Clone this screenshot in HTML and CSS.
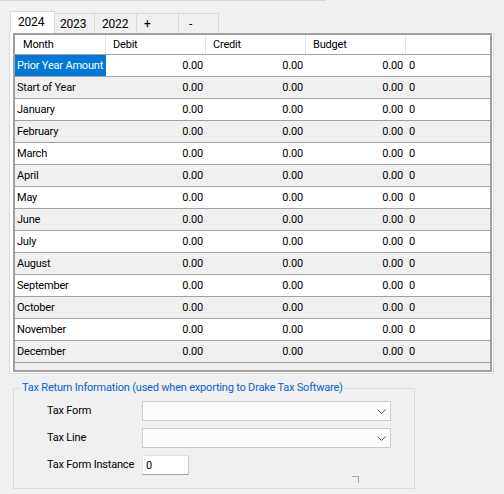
FILE: index.html
```html
<!DOCTYPE html>
<html lang="en">
<head>
  <meta charset="UTF-8">
  <meta name="viewport" content="width=device-width, initial-scale=1.0">
  <title>Account Budget</title>
  <link rel="stylesheet" href="styles.css">
</head>
<body>
  <div class="topEdge"></div>

  <div class="tabStrip">
    <div class="tab selectedTab">2024</div>
    <div class="tab tab2023">2023</div>
    <div class="tab tab2022">2022</div>
    <div class="tab tabPlus">+</div>
    <div class="tab tabMinus">-</div>
  </div>

  <div class="tabPanel">
    <div class="grid">
      <div class="gridRow headerRow">
        <div class="cell">Month</div>
        <div class="cell">Debit</div>
        <div class="cell">Credit</div>
        <div class="cell">Budget</div>
        <div class="cell"></div>
      </div>
      <div class="gridRow">
        <div class="cell monthCell selectedCell">Prior Year Amount</div>
        <div class="cell num">0.00</div><div class="cell num">0.00</div><div class="cell num">0.00</div><div class="cell extra">0</div>
      </div>
      <div class="gridRow altRow">
        <div class="cell monthCell">Start of Year</div>
        <div class="cell num">0.00</div><div class="cell num">0.00</div><div class="cell num">0.00</div><div class="cell extra">0</div>
      </div>
      <div class="gridRow">
        <div class="cell monthCell">January</div>
        <div class="cell num">0.00</div><div class="cell num">0.00</div><div class="cell num">0.00</div><div class="cell extra">0</div>
      </div>
      <div class="gridRow altRow">
        <div class="cell monthCell">February</div>
        <div class="cell num">0.00</div><div class="cell num">0.00</div><div class="cell num">0.00</div><div class="cell extra">0</div>
      </div>
      <div class="gridRow">
        <div class="cell monthCell">March</div>
        <div class="cell num">0.00</div><div class="cell num">0.00</div><div class="cell num">0.00</div><div class="cell extra">0</div>
      </div>
      <div class="gridRow altRow">
        <div class="cell monthCell">April</div>
        <div class="cell num">0.00</div><div class="cell num">0.00</div><div class="cell num">0.00</div><div class="cell extra">0</div>
      </div>
      <div class="gridRow">
        <div class="cell monthCell">May</div>
        <div class="cell num">0.00</div><div class="cell num">0.00</div><div class="cell num">0.00</div><div class="cell extra">0</div>
      </div>
      <div class="gridRow altRow">
        <div class="cell monthCell">June</div>
        <div class="cell num">0.00</div><div class="cell num">0.00</div><div class="cell num">0.00</div><div class="cell extra">0</div>
      </div>
      <div class="gridRow">
        <div class="cell monthCell">July</div>
        <div class="cell num">0.00</div><div class="cell num">0.00</div><div class="cell num">0.00</div><div class="cell extra">0</div>
      </div>
      <div class="gridRow altRow">
        <div class="cell monthCell">August</div>
        <div class="cell num">0.00</div><div class="cell num">0.00</div><div class="cell num">0.00</div><div class="cell extra">0</div>
      </div>
      <div class="gridRow">
        <div class="cell monthCell">September</div>
        <div class="cell num">0.00</div><div class="cell num">0.00</div><div class="cell num">0.00</div><div class="cell extra">0</div>
      </div>
      <div class="gridRow altRow">
        <div class="cell monthCell">October</div>
        <div class="cell num">0.00</div><div class="cell num">0.00</div><div class="cell num">0.00</div><div class="cell extra">0</div>
      </div>
      <div class="gridRow">
        <div class="cell monthCell">November</div>
        <div class="cell num">0.00</div><div class="cell num">0.00</div><div class="cell num">0.00</div><div class="cell extra">0</div>
      </div>
      <div class="gridRow altRow">
        <div class="cell monthCell">December</div>
        <div class="cell num">0.00</div><div class="cell num">0.00</div><div class="cell num">0.00</div><div class="cell extra">0</div>
      </div>
      <div class="gridFill"></div>
    </div>
  </div>

  <fieldset class="taxGroup">
    <legend class="taxLegend">Tax Return Information (used when exporting to Drake Tax Software)</legend>
    <div class="taxFields">
      <label class="fieldLabel">Tax Form</label>
      <div class="combo">
        <svg class="chevron" width="9" height="5" viewBox="0 0 9 5"><polyline points="0.5,0.5 4.5,4.5 8.5,0.5" fill="none" stroke="#606060" stroke-width="1"/></svg>
      </div>
      <label class="fieldLabel">Tax Line</label>
      <div class="combo">
        <svg class="chevron" width="9" height="5" viewBox="0 0 9 5"><polyline points="0.5,0.5 4.5,4.5 8.5,0.5" fill="none" stroke="#606060" stroke-width="1"/></svg>
      </div>
      <label class="fieldLabel">Tax Form Instance</label>
      <div class="instanceBox">0</div>
    </div>
    <div class="grip"></div>
  </fieldset>
</body>
</html>
```

FILE: styles.css
```css
body{
  margin: 0;
  background-color: #f0f0f0;
  font-family: Roboto, "Liberation Sans", sans-serif;
  font-size: 11px;
  letter-spacing: -0.2px;
  color: #000000;
}
.topEdge{
  width: 326px;
  height: 1px;
  background-color: #d9d9d9;
}

/* tabs */
.tabStrip{
  display: flex;
  align-items: flex-end;
  margin-top: 10px;
  margin-left: 10px;
  height: 22px;
}
.tab{
  box-sizing: border-box;
  height: 20px;
  line-height: 21px;
  padding-left: 6px;
  background-color: #f0f0f0;
  border: 1px solid #d9d9d9;
  border-bottom: none;
  margin-left: -1px;
  font-size: 12px;
}
.selectedTab{
  height: 22px;
  line-height: 21px;
  width: 45px;
  margin-left: 0;
  padding-left: 7px;
  background-color: #ffffff;
  position: relative;
  z-index: 1;
}
.tab2023{ width: 41px; padding-left: 5px; }
.tab2022{ width: 43px; padding-left: 7px; }
.tabPlus{ width: 43px; padding-left: 7px; }
.tabMinus{ width: 41px; padding-left: 10px; }

.tabPanel{
  box-sizing: border-box;
  width: 485px;
  margin-left: 9px;
  padding: 0 1px 1px 3px;
  background-color: #ffffff;
  border: 1px solid #dcdcdc;
  border-top: none;
}

/* data grid */
.grid{
  border: 2px solid #a0a0a0;
  background-color: #f0f0f0;
}
.gridRow{
  display: grid;
  grid-template-columns: 91px 100px 100px 100px 1fr;
  height: 21px;
  line-height: 22px;
  background-color: #ffffff;
  border-bottom: 1px solid #a0a0a0;
}
.altRow{
  background-color: #f0f0f0;
}
.headerRow{
  height: 19px;
  line-height: 20px;
}
.headerRow .cell{
  padding-left: 7px;
  border-right: 1px solid #e3e3e3;
}
.headerRow .cell:first-child{
  padding-left: 8px;
}
.headerRow .cell:last-child{
  border-right: none;
}
.cell{
  white-space: nowrap;
  overflow: hidden;
}
.monthCell{
  padding-left: 2px;
}
.selectedCell{
  background-color: #0078d7;
  color: #ffffff;
}
.num{
  text-align: right;
  padding-right: 3px;
}
.extra{
  padding-left: 3px;
}
.gridFill{
  height: 7px;
}

/* tax group */
.taxGroup{
  position: relative;
  box-sizing: border-box;
  width: 402px;
  margin: 6px 0 0 13px;
  padding: 0;
  border: 1px solid #dcdcdc;
}
.taxLegend{
  margin-left: 6px;
  padding: 0 2px;
  line-height: 16px;
  color: #0066cc;
}
.taxFields{
  display: grid;
  grid-template-columns: 95px auto;
  row-gap: 7px;
  padding: 5px 0 13px 33px;
  align-items: center;
}
.fieldLabel{
  line-height: 20px;
  white-space: nowrap;
}
.combo{
  box-sizing: border-box;
  width: 249px;
  height: 20px;
  background-color: #fcfcfc;
  border: 1px solid #cccccc;
  display: flex;
  align-items: center;
  justify-content: flex-end;
  padding-right: 4px;
}
.instanceBox{
  box-sizing: border-box;
  width: 47px;
  height: 20px;
  line-height: 19px;
  padding-left: 3px;
  background-color: #ffffff;
  border: 1px solid #e3e3e3;
  border-right-color: #c8c8c8;
  border-bottom-color: #a0a0a0;
}
.grip{
  position: absolute;
  left: 338px;
  top: 80px;
  width: 6px;
  height: 6px;
  border-top: 1px solid #a8a8a8;
  border-right: 1px solid #a8a8a8;
}
```
